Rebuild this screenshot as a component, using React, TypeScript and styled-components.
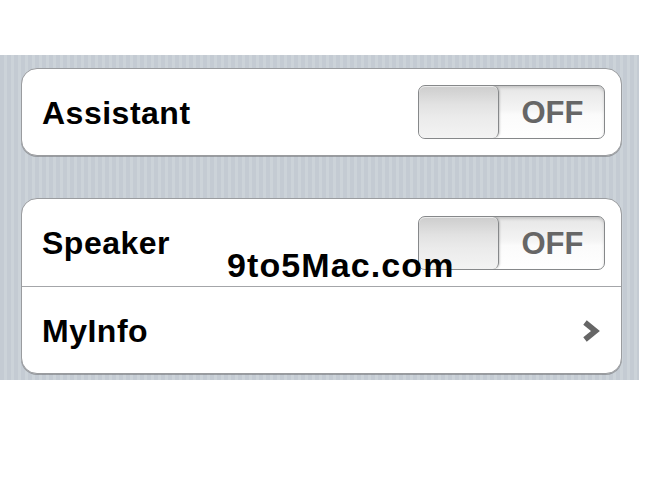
import React from "react";
import styled, { createGlobalStyle } from "styled-components";

const Global = createGlobalStyle`
  html, body { margin: 0; padding: 0; background: #ffffff; }
  body { font-family: "Liberation Sans", Arial, sans-serif; }
`;

const Page = styled.div`
  position: relative;
  width: 651px;
  height: 488px;
  background: #ffffff;
  padding-top: 55px;
  box-sizing: border-box;
`;

const Panel = styled.div`
  width: 639px;
  height: 325px;
  box-sizing: border-box;
  padding: 13px 17px 0 21px;
  display: flex;
  flex-direction: column;
  gap: 42px;
  background: repeating-linear-gradient(
    to right,
    #c4cbd3 0px,
    #c4cbd3 4px,
    #ccd3d9 4px,
    #ccd3d9 7px
  );
`;

const Group = styled.div`
  background: #ffffff;
  border: 1px solid #9a9c9f;
  border-radius: 16px;
  box-shadow: 0 1px 0 rgba(120, 122, 125, 0.6);
  display: flex;
  flex-direction: column;
  overflow: hidden;
`;

const Row = styled.div<{ $divider?: boolean; $h?: number }>`
  height: ${(p) => p.$h ?? 86}px;
  box-sizing: border-box;
  display: flex;
  align-items: center;
  justify-content: space-between;
  padding: 0 16px 0 20px;
  border-top: ${(p) => (p.$divider ? "1px solid #a4a6a9" : "none")};
`;

const Label = styled.span`
  font-family: "Liberation Sans", Arial, sans-serif;
  font-weight: 700;
  font-size: 32px;
  letter-spacing: 0.5px;
  color: #000000;
  margin-top: 2px;
`;

const Switch = styled.div`
  width: 187px;
  height: 54px;
  box-sizing: border-box;
  border: 1px solid #86888a;
  border-radius: 7px;
  background: linear-gradient(to bottom, #e6e6e6 0%, #f4f4f4 45%, #fbfbfb 55%, #ffffff 100%);
  display: flex;
  align-items: stretch;
  overflow: hidden;
  box-shadow: inset 0 2px 3px rgba(0, 0, 0, 0.14);
`;

const Thumb = styled.div`
  width: 80px;
  box-sizing: border-box;
  border-right: 1px solid #86888a;
  border-radius: 6px;
  background: linear-gradient(to bottom, #cdcdcd 0%, #e2e2e2 35%, #ebebeb 60%, #f3f3f3 100%);
  box-shadow: inset 0 1px 0 rgba(255, 255, 255, 0.6), 1px 0 2px rgba(0, 0, 0, 0.18);
`;

const SwitchText = styled.div`
  flex: 1;
  display: flex;
  align-items: center;
  justify-content: center;
  font-family: "Liberation Sans", Arial, sans-serif;
  font-weight: 700;
  font-size: 31px;
  color: #666666;
  padding-left: 2px;
  padding-top: 2px;
`;

const Chevron = styled.svg`
  width: 20px;
  height: 24px;
  margin-right: 4px;
  margin-top: 2px;
`;

const Watermark = styled.div`
  position: absolute;
  left: 227px;
  top: 248px;
  font-family: "Liberation Sans", Arial, sans-serif;
  font-weight: 700;
  font-size: 34px;
  letter-spacing: 1.1px;
  color: #000000;
  line-height: 1;
  pointer-events: none;
`;

const Toggle: React.FC = () => (
  <Switch>
    <Thumb />
    <SwitchText>OFF</SwitchText>
  </Switch>
);

export default function App() {
  return (
    <Page>
      <Global />
      <Panel>
        <Group>
          <Row>
            <Label>Assistant</Label>
            <Toggle />
          </Row>
        </Group>
        <Group>
          <Row $h={87}>
            <Label>Speaker</Label>
            <Toggle />
          </Row>
          <Row $divider $h={87}>
            <Label>MyInfo</Label>
            <Chevron viewBox="0 0 20 24">
              <path d="M4 3.5 L14.5 12 L4 20.5" fill="none" stroke="#666666" strokeWidth="5.5" strokeLinejoin="miter" />
            </Chevron>
          </Row>
        </Group>
      </Panel>
      <Watermark>9to5Mac.com</Watermark>
    </Page>
  );
}
